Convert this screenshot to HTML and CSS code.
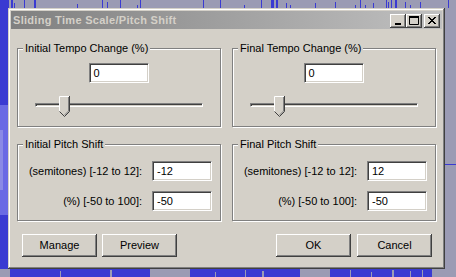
FILE: index.html
```html
<!DOCTYPE html>
<html lang="en">
  <head>
    <meta charset="UTF-8" />
    <title>Sliding Time Scale/Pitch Shift</title>
    <link rel="stylesheet" href="styles.css">
  </head>

  <body>
    <svg class="desktop" width="456" height="277" viewBox="0 0 456 277">
      <rect x="0" y="0" width="9" height="277" fill="#3a3ad2" />
      <rect x="0" y="105" width="9" height="110" fill="#6a6ae4" />
      <rect x="0" y="130" width="3" height="60" fill="#8a8ae6" />
      <rect x="0" y="269" width="456" height="8" fill="#3a3ad2" />
      <rect x="0" y="269" width="10" height="8" fill="#9b9bb4" />
      <rect x="300" y="269" width="30" height="8" fill="#9b9bb4" />
      <rect x="432" y="269" width="24" height="8" fill="#9b9bb4" />
      <rect x="445" y="164" width="11" height="1" fill="#3a3ad2" />
      <g fill="#3a3ad2">
        <rect x="11" y="0" width="2" height="8" />
        <rect x="14" y="3" width="1" height="5" />
        <rect x="24" y="0" width="1" height="8" />
        <rect x="34" y="0" width="2" height="8" />
        <rect x="77" y="4" width="1" height="4" />
        <rect x="102" y="0" width="1" height="8" />
        <rect x="107" y="2" width="1" height="6" />
        <rect x="120" y="0" width="1" height="8" />
        <rect x="137" y="5" width="1" height="3" />
        <rect x="140" y="0" width="1" height="8" />
        <rect x="203" y="0" width="1" height="8" />
        <rect x="220" y="0" width="1" height="8" />
        <rect x="244" y="5" width="1" height="3" />
        <rect x="261" y="0" width="1" height="8" />
        <rect x="271" y="0" width="3" height="8" />
        <rect x="276" y="0" width="2" height="8" />
        <rect x="286" y="3" width="1" height="5" />
        <rect x="290" y="5" width="1" height="3" />
        <rect x="315" y="3" width="1" height="5" />
        <rect x="335" y="2" width="1" height="6" />
        <rect x="355" y="5" width="1" height="3" />
        <rect x="360" y="0" width="1" height="8" />
        <rect x="365" y="5" width="1" height="3" />
        <rect x="373" y="3" width="1" height="5" />
        <rect x="386" y="0" width="1" height="8" />
        <rect x="388" y="2" width="1" height="6" />
        <rect x="391" y="0" width="1" height="8" />
        <rect x="395" y="0" width="2" height="8" />
        <rect x="405" y="2" width="1" height="6" />
        <rect x="410" y="5" width="1" height="3" />
        <rect x="420" y="2" width="1" height="6" />
        <rect x="448" y="0" width="1" height="8" />
      </g>
      <g fill="#9b9bb4">
        <rect x="60" y="271" width="1" height="6" />
        <rect x="110" y="270" width="2" height="7" />
        <rect x="150" y="269" width="40" height="8" />
        <rect x="215" y="272" width="1" height="5" />
        <rect x="245" y="270" width="1" height="7" />
        <rect x="262" y="271" width="2" height="6" />
        <rect x="350" y="270" width="1" height="7" />
        <rect x="371" y="272" width="1" height="5" />
        <rect x="392" y="270" width="2" height="7" />
        <rect x="410" y="271" width="1" height="6" />
        <rect x="422" y="270" width="1" height="7" />
      </g>
    </svg>

    <div class="window">
      <div class="titlebar">
        <span class="title">Sliding Time Scale/Pitch Shift</span>
        <div class="caption-buttons">
          <span class="cap-btn">
            <svg width="10" height="9" viewBox="0 0 10 9"><rect x="2" y="7" width="6" height="2" fill="#000" /></svg>
          </span>
          <span class="cap-btn">
            <svg width="10" height="9" viewBox="0 0 10 9"><path d="M0.5 1.5 H9.5 V8.5 H0.5 Z" fill="none" stroke="#000" /><rect x="0" y="0" width="10" height="2" fill="#000" /></svg>
          </span>
          <span class="cap-btn close">
            <svg width="10" height="9" viewBox="0 0 10 9"><path d="M1 1 L8 8 M2 1 L9 8 M8 1 L1 8 M9 1 L2 8" stroke="#000" stroke-width="1" /></svg>
          </span>
        </div>
      </div>

      <div class="client">
        <div class="groups">
          <div class="group tempo">
            <span class="group-title">Initial Tempo Change (%)</span>
            <div class="field center">0</div>
            <div class="slider">
              <div class="track"></div>
              <svg class="thumb" width="11" height="21" viewBox="0 0 11 21">
                <path d="M0.5 15.5 V0.5 H10.5 V15.5 L5.5 20.5 Z" fill="#d4d0c8" />
                <path d="M0.5 15.5 V0.5 H10" fill="none" stroke="#fff" />
                <path d="M10.5 0 V15.5 L5.5 20.5 L0.5 15.5" fill="none" stroke="#404040" />
                <path d="M9.5 1 V15 L5.5 19" fill="none" stroke="#808080" />
              </svg>
            </div>
          </div>

          <div class="group tempo">
            <span class="group-title">Final Tempo Change (%)</span>
            <div class="field center">0</div>
            <div class="slider">
              <div class="track"></div>
              <svg class="thumb" width="11" height="21" viewBox="0 0 11 21">
                <path d="M0.5 15.5 V0.5 H10.5 V15.5 L5.5 20.5 Z" fill="#d4d0c8" />
                <path d="M0.5 15.5 V0.5 H10" fill="none" stroke="#fff" />
                <path d="M10.5 0 V15.5 L5.5 20.5 L0.5 15.5" fill="none" stroke="#404040" />
                <path d="M9.5 1 V15 L5.5 19" fill="none" stroke="#808080" />
              </svg>
            </div>
          </div>
        </div>

        <div class="groups pitch-row">
          <div class="group pitch">
            <span class="group-title">Initial Pitch Shift</span>
            <div class="form">
              <span class="label">(semitones) [-12 to 12]:</span>
              <div class="field">-12</div>
              <span class="label">(%) [-50 to 100]:</span>
              <div class="field">-50</div>
            </div>
          </div>

          <div class="group pitch">
            <span class="group-title">Final Pitch Shift</span>
            <div class="form">
              <span class="label">(semitones) [-12 to 12]:</span>
              <div class="field">12</div>
              <span class="label">(%) [-50 to 100]:</span>
              <div class="field">-50</div>
            </div>
          </div>
        </div>

        <div class="buttons">
          <div class="btn-pair">
            <div class="btn">Manage</div>
            <div class="btn">Preview</div>
          </div>
          <div class="btn-pair right">
            <div class="btn">OK</div>
            <div class="btn">Cancel</div>
          </div>
        </div>
      </div>
    </div>
  </body>
</html>
```

FILE: styles.css
```css
body {
  margin: 0;
  width: 456px;
  height: 277px;
  overflow: hidden;
  background-color: #9b9bb4;
  font-family: "Liberation Sans", Arial, sans-serif;
  font-size: 11px;
  color: #000;
}

.desktop {
  position: absolute;
  left: 0;
  top: 0;
}

.window {
  position: absolute;
  left: 8px;
  top: 8px;
  width: 437px;
  height: 261px;
  box-sizing: border-box;
  padding: 3px;
  background-color: #d4d0c8;
  box-shadow: inset -1px -1px #404040, inset 1px 1px #d4d0c8,
    inset -2px -2px #808080, inset 2px 2px #fff;
  display: flex;
  flex-direction: column;
}

.titlebar {
  height: 18px;
  display: flex;
  align-items: center;
  justify-content: space-between;
  background: linear-gradient(to right, #808080, #c0c0c0);
  padding: 0 2px;
}

.title {
  font-weight: bold;
  color: #d4d0c8;
  letter-spacing: 0.3px;
  line-height: 18px;
}

.caption-buttons {
  display: flex;
  margin-top: 1px;
}

.cap-btn {
  width: 16px;
  height: 14px;
  box-sizing: border-box;
  background-color: #d4d0c8;
  box-shadow: inset -1px -1px #404040, inset 1px 1px #fff,
    inset -2px -2px #808080;
  display: flex;
  align-items: center;
  justify-content: center;
  padding: 0 1px 1px 0;
}

.cap-btn.close {
  margin-left: 2px;
}

.client {
  display: flex;
  flex-direction: column;
  flex: 1;
}

.groups {
  display: flex;
  gap: 11px;
  padding: 0 6px;
  margin-top: 19px;
}

.groups.pitch-row {
  margin-top: 17px;
}

.group {
  position: relative;
  width: 204px;
  box-sizing: border-box;
  border: 1px solid #808080;
  box-shadow: inset 1px 1px #fff, 1px 1px #fff;
}

.group.tempo {
  height: 79px;
  display: flex;
  flex-direction: column;
  align-items: center;
  padding-top: 14px;
}

.group.pitch {
  height: 77px;
  padding-top: 16px;
}

.group-title {
  position: absolute;
  left: 5px;
  top: -8px;
  padding: 0 2px;
  line-height: 14px;
  background-color: #d4d0c8;
}

.field {
  width: 60px;
  height: 20px;
  box-sizing: border-box;
  background-color: #fff;
  border: 1px solid;
  border-color: #808080 #fff #fff #808080;
  box-shadow: inset 1px 1px #404040, inset -1px -1px #d4d0c8;
  padding: 0 4px;
  line-height: 18px;
}

.field.center {
  margin-left: -1px;
}

.slider {
  position: relative;
  align-self: stretch;
  height: 21px;
  margin: 13px 17px 0 17px;
}

.track {
  position: absolute;
  left: 0;
  right: 0;
  top: 7px;
  height: 4px;
  box-sizing: border-box;
  border: 1px solid;
  border-color: #808080 #fff #fff #808080;
  box-shadow: inset 1px 1px #404040;
  background-color: #d4d0c8;
}

.thumb {
  position: absolute;
  left: 24px;
  top: 0;
}

.form {
  display: grid;
  grid-template-columns: auto 60px;
  justify-content: end;
  align-items: center;
  column-gap: 10px;
  row-gap: 10px;
  padding-right: 8px;
}

.label {
  text-align: right;
}

.buttons {
  display: flex;
  justify-content: space-between;
  padding: 0 10px 0 11px;
  margin-top: 13px;
}

.btn-pair {
  display: flex;
  gap: 5px;
}

.btn-pair.right {
  gap: 6px;
}

.btn {
  width: 75px;
  height: 23px;
  box-sizing: border-box;
  background-color: #d4d0c8;
  box-shadow: inset -1px -1px #404040, inset 1px 1px #fff,
    inset -2px -2px #808080;
  display: flex;
  align-items: center;
  justify-content: center;
  padding-bottom: 1px;
}
```
